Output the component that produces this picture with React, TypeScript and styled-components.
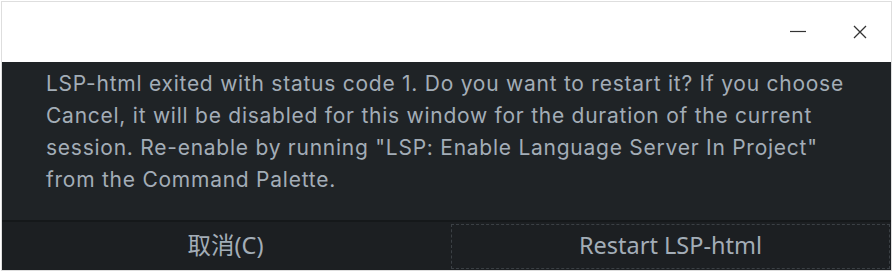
import React from "react";
import styled, { createGlobalStyle } from "styled-components";

const Global = createGlobalStyle`
  html, body { margin: 0; padding: 0; background: #ffffff; }
  * { box-sizing: border-box; }
`;

const Frame = styled.div`
  width: 891px;
  height: 270px;
  margin: 1px 0 0 1px;
  border: 1px solid #dedede;
  display: flex;
  flex-direction: column;
  background: #1f2326;
`;

const TitleBar = styled.div`
  height: 60px;
  background: #ffffff;
  display: flex;
  align-items: center;
  justify-content: flex-end;
  padding-right: 0;
  flex: none;
`;

const WinButton = styled.button`
  width: 62px;
  height: 44px;
  border: none;
  background: transparent;
  display: flex;
  align-items: center;
  justify-content: center;
  padding: 0;
`;

const Body = styled.div`
  flex: 1;
  background: #1f2326;
  padding: 6px 10px 0 44px;
  font-family: "Inter", "Noto Sans CJK SC", sans-serif;
  font-size: 21px;
  line-height: 32px;
  letter-spacing: 0.75px;
  color: #a3adb7;
  white-space: nowrap;
`;

const Actions = styled.div`
  height: 50px;
  flex: none;
  display: grid;
  grid-template-columns: 447px 1fr;
  border-top: 2px solid #15181a;
  background: #1c1f22;
`;

const ActionButton = styled.button<{ $focused?: boolean }>`
  border: 1px ${(p) => (p.$focused ? "dashed #3b4045" : "solid transparent")};
  margin: ${(p) => (p.$focused ? "2px 1px 1px 2px" : "0")};
  background: transparent;
  color: #a3adb7;
  font-family: "Noto Sans", "Noto Sans CJK SC", sans-serif;
  font-size: 23.5px;
  display: flex;
  align-items: center;
  justify-content: center;
  padding: 0 0 4px 0;
`;

const Label = styled.span`
  display: inline-block;
`;

export default function App() {
  return (
    <>
      <Global />
      <Frame>
        <TitleBar>
          <WinButton aria-label="minimize">
            <svg width="16" height="16" viewBox="0 0 16 16">
              <path d="M0 7.5h16" stroke="#333" strokeWidth="1.2" />
            </svg>
          </WinButton>
          <WinButton aria-label="close">
            <svg width="14" height="14" viewBox="0 0 14 14">
              <path d="M1 1l12 12M13 1L1 13" stroke="#333" strokeWidth="1.3" />
            </svg>
          </WinButton>
        </TitleBar>
        <Body>
          LSP-html exited with status code 1. Do you want to restart it? If you choose
          <br />
          Cancel, it will be disabled for this window for the duration of the current
          <br />
          session. Re-enable by running "LSP: Enable Language Server In Project"
          <br />
          from the Command Palette.
        </Body>
        <Actions>
          <ActionButton>
            <Label>取消(C)</Label>
          </ActionButton>
          <ActionButton $focused>
            <Label>Restart LSP-html</Label>
          </ActionButton>
        </Actions>
      </Frame>
    </>
  );
}
